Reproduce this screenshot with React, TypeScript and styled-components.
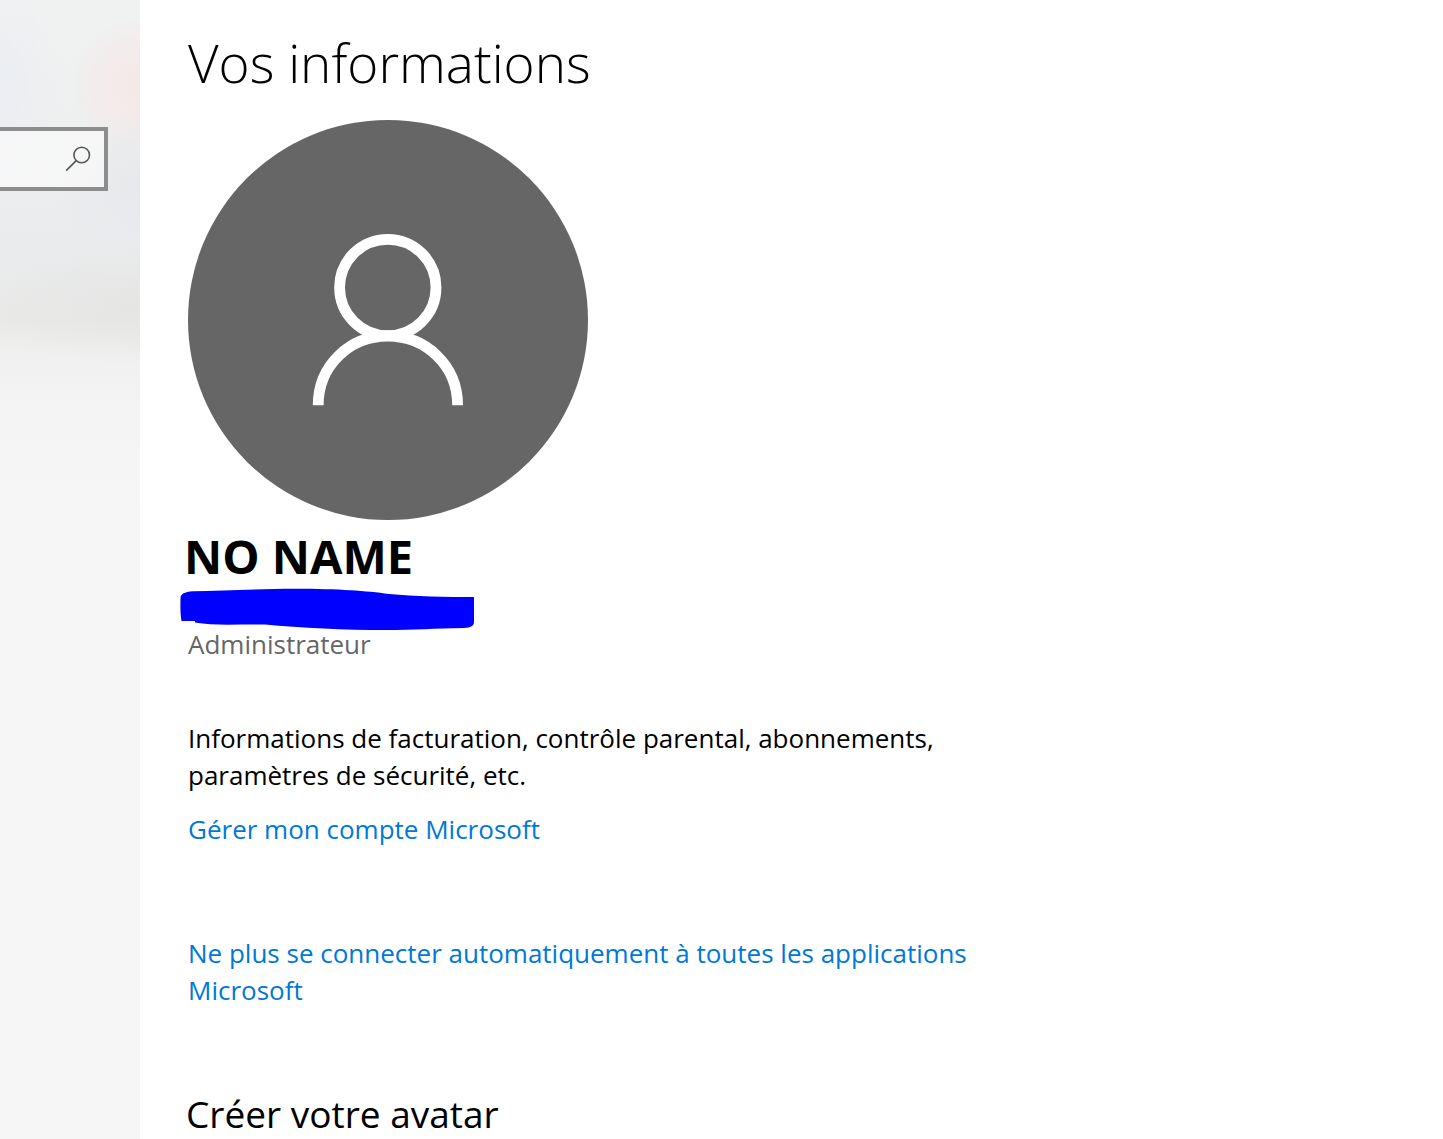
import React from "react";
import styled, { createGlobalStyle } from "styled-components";

const GlobalStyle = createGlobalStyle`
  *, *::before, *::after {
    box-sizing: border-box;
  }

  body {
    margin: 0;
    background: #ffffff;
    color: #000000;
    font-family: "Segoe UI", "Open Sans", "Noto Sans", sans-serif;
    font-size: 26px;
    line-height: 37px;
  }
`;

const Page = styled.div`
  display: grid;
  grid-template-columns: 140px minmax(0, 1fr);
  min-height: 100vh;
`;

const Sidebar = styled.aside`
  padding: 127px 32px 0 0;
  background:
    radial-gradient(ellipse 64px 66px at 136px 84px, rgba(246, 230, 229, 0.75) 0%, rgba(247, 231, 230, 0.6) 45%, rgba(247, 234, 233, 0) 100%),
    radial-gradient(ellipse 60px 90px at 0 85px, rgba(233, 237, 244, 0.8) 0%, rgba(233, 237, 244, 0) 100%),
    radial-gradient(ellipse 90px 80px at 140px 185px, rgba(230, 231, 234, 0.8) 0%, rgba(230, 231, 234, 0) 100%),
    radial-gradient(ellipse 160px 60px at 140px 305px, rgba(228, 228, 227, 0.8) 0%, rgba(228, 228, 227, 0) 100%),
    linear-gradient(180deg, #f0f1f1 0, #eeefef 130px, #ebecee 220px, #e9eaea 290px, #e9e9e8 320px, #f0f0f0 355px, #f4f4f4 410px, #f6f6f6 520px, #f6f6f6 100%);
`;

const SearchBox = styled.form`
  display: flex;
  align-items: stretch;
  height: 64px;
  border: 4px solid #8d8d8d;
  border-left: 0;
  background: rgba(255, 255, 255, 0.5);
`;

const SearchInput = styled.input`
  flex: 1;
  min-width: 0;
  padding: 0 8px;
  border: 0;
  outline: 0;
  background: transparent;
  font: inherit;
`;

const SearchButton = styled.button`
  display: flex;
  align-items: center;
  justify-content: center;
  width: 52px;
  padding: 0;
  border: 0;
  background: transparent;
  color: #555555;
`;

const Content = styled.main`
  display: flex;
  flex-direction: column;
  align-items: flex-start;
  padding: 25px 48px 0;
`;

const Title = styled.h1`
  margin: 0;
  font-size: 53px;
  font-weight: 300;
  line-height: 76px;
`;

const Avatar = styled.div`
  display: flex;
  width: 400px;
  height: 400px;
  margin-top: 19px;
  border-radius: 50%;
  background: #666666;
`;

const UserName = styled.h2`
  margin: 4px 0 0 -4px;
  font-size: 47px;
  font-weight: 700;
  line-height: 64px;
`;

const Redaction = styled.svg`
  display: block;
  margin-left: -8px;
`;

const Role = styled.p`
  margin: 0;
  color: #666666;
  line-height: 28px;
`;

const Description = styled.p`
  max-width: 800px;
  margin: 62px 0 17px;
`;

const Link = styled.a`
  max-width: 800px;
  color: #0078d7;
  text-decoration: none;
`;

const LinkGroup = styled.nav`
  display: flex;
  flex-direction: column;
  gap: 87px;
`;

const SectionTitle = styled.h2`
  margin: 80px 0 0 -2px;
  font-size: 37px;
  font-weight: 400;
  line-height: 50px;
`;

function SearchIcon() {
  return (
    <svg width="26" height="26" viewBox="0 0 26 26" fill="none" stroke="currentColor" strokeWidth="1.6" aria-hidden="true">
      <circle cx="16.7" cy="9" r="7.8" />
      <path d="M11.2 14.6 1.2 24.6" />
    </svg>
  );
}

function PersonIcon() {
  return (
    <svg width="400" height="400" viewBox="0 0 400 400" fill="none" stroke="#ffffff" strokeWidth="10.8" aria-hidden="true">
      <circle cx="199.8" cy="167.5" r="48.2" />
      <path d="M130.2 285.3C130.2 245 162 216 199.8 216S269.6 245 269.6 285.3" />
    </svg>
  );
}

export default function App() {
  return (
    <>
      <GlobalStyle />
      <Page>
        <Sidebar>
          <SearchBox role="search" onSubmit={(event) => event.preventDefault()}>
            <SearchInput type="text" aria-label="Rechercher un paramètre" />
            <SearchButton type="submit" aria-label="Rechercher">
              <SearchIcon />
            </SearchButton>
          </SearchBox>
        </Sidebar>
        <Content>
          <Title>Vos informations</Title>
          <Avatar>
            <PersonIcon />
          </Avatar>
          <UserName>NO NAME</UserName>
          <Redaction width="294" height="42" viewBox="0 0 294 42" aria-hidden="true">
            <path
              fill="#0000ff"
              d="M0.5 10C1 6 4 4 13 3.3C42 3 76 0.8 115 0.8C160 0.8 186 3 209 6C235 8.5 266 9 294 9V34C294 38 291 39.5 284 40C255 40.5 234 42 205 42C166 42 120 40 85 36.5C60 36 34 38 15 34.5V33H1.5C0 24 0.5 17 0.5 10Z"
            />
          </Redaction>
          <Role>Administrateur</Role>
          <Description>
            Informations de facturation, contrôle parental, abonnements, paramètres de sécurité, etc.
          </Description>
          <LinkGroup>
            <Link href="#compte">Gérer mon compte Microsoft</Link>
            <Link href="#connexion">
              Ne plus se connecter automatiquement à toutes les applications Microsoft
            </Link>
          </LinkGroup>
          <SectionTitle>Créer votre avatar</SectionTitle>
        </Content>
      </Page>
    </>
  );
}
